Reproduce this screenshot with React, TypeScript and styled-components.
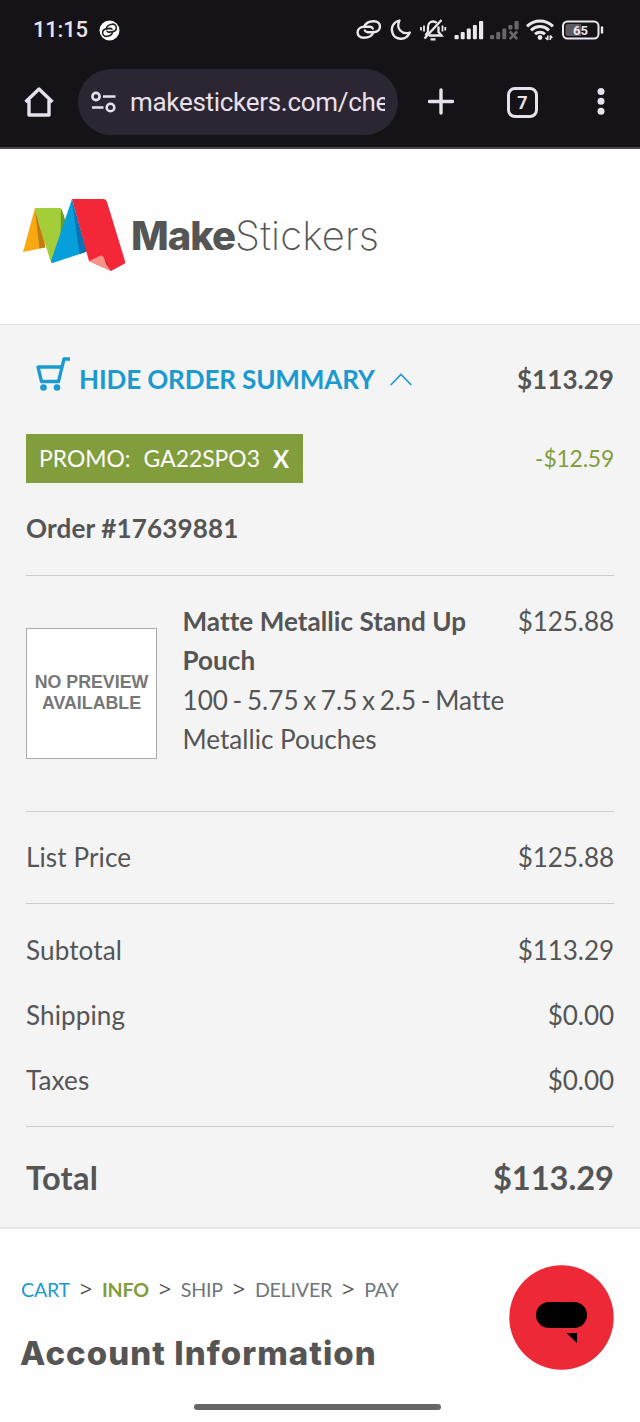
import React from "react";
import styled, { createGlobalStyle } from "styled-components";

const GlobalStyle = createGlobalStyle`
  *, *::before, *::after { box-sizing: border-box; }
  body { margin: 0; background: #fff; overflow: hidden; }
  svg { display: block; flex: none; }
`;

const Screen = styled.div`
  position: relative;
  width: 640px;
  height: 1422px;
  overflow: hidden;
  background: #fefefe;
  color: #555;
  font-family: Lato, sans-serif;
  font-size: 26.1px;
  line-height: 39px;
  font-variant-ligatures: none;
`;

const DeviceChrome = styled.div`
  height: 149px;
  background: #151218;
  border-bottom: 2px solid #4b494c;
  color: #e8e0ec;
`;

const StatusBar = styled.div`
  height: 60px;
  display: flex;
  align-items: center;
  justify-content: space-between;
  padding: 0 35px 0 33px;
`;

const Clock = styled.div`
  display: flex;
  align-items: center;
  gap: 11px;
  font: 500 22px/26px Roboto, sans-serif;
  letter-spacing: -0.2px;
`;

const AddressBar = styled.div`
  height: 84px;
  display: flex;
  align-items: center;
  padding: 0 34px 0 24px;
`;

const UrlPill = styled.div`
  width: 320px;
  height: 66px;
  margin-left: 24px;
  padding: 0 13px;
  border-radius: 33px;
  background: #2c2632;
  display: flex;
  align-items: center;
  gap: 14px;
`;

const Url = styled.div`
  width: 256px;
  overflow: hidden;
  white-space: nowrap;
  font: 400 26px/36px Roboto, sans-serif;
  letter-spacing: -0.3px;
`;

const BrowserActions = styled.div`
  flex: 1;
  display: flex;
  align-items: center;
  justify-content: space-between;
  padding-left: 30px;
`;

const TabCount = styled.div`
  width: 31px;
  height: 31px;
  margin-left: 11px;
  margin-right: 16px;
  border: 3px solid #e8e0ec;
  border-radius: 8px;
  font: 700 18px/25px Roboto, sans-serif;
  text-align: center;
`;

const SiteHeader = styled.header`
  height: 176px;
  padding: 0 22px 3px;
  border-bottom: 1px solid #dedede;
  display: flex;
  align-items: center;
  background: #fefefe;
`;

const Wordmark = styled.div`
  display: flex;
  align-items: baseline;
  margin-left: 4px;
  padding-top: 1px;
  font-family: Inter, sans-serif;
  font-size: 40px;
  line-height: 48px;
  white-space: nowrap;
`;

const WordmarkPart = styled.span<{ $weight: number; $spacing: number }>`
  font-weight: ${(p) => p.$weight};
  letter-spacing: ${(p) => p.$spacing}px;
`;

const Summary = styled.section`
  height: 904px;
  padding: 34px 26px 0;
  border-bottom: 2px solid #e6e6e6;
  background: #f4f4f4;
`;

const Row = styled.div<{ $gap?: number }>`
  display: flex;
  justify-content: space-between;
  align-items: center;
  margin-top: ${(p) => p.$gap ?? 0}px;
  white-space: nowrap;
`;

const Label = styled.span`
  letter-spacing: 0.1px;
`;

const Amount = styled.span`
  letter-spacing: -0.1px;
`;

const Toggle = styled.div`
  display: flex;
  align-items: center;
  height: 40px;
  padding-left: 10px;
  color: #1c9ad0;
  font-weight: 700;
`;

const CartIcon = styled.svg`
  margin-bottom: 10px;
`;

const ToggleText = styled.span`
  margin: 0 15px 0 8px;
  letter-spacing: -0.17px;
`;

const Strong = styled.span<{ $size?: number; $spacing?: number }>`
  font-weight: 700;
  font-size: ${(p) => p.$size ?? 26.1}px;
  letter-spacing: ${(p) => p.$spacing ?? 0}px;
`;

const Promo = styled.div`
  display: flex;
  align-items: center;
  width: 277px;
  height: 49px;
  padding: 0 13px;
  background: #829d3c;
  color: #fff;
  font-size: 22.9px;
  gap: 13px;
`;

const Discount = styled.span`
  color: #829d3c;
  font-size: 22.9px;
  letter-spacing: -0.2px;
`;

const Rule = styled.hr<{ $top: number; $bottom: number }>`
  height: 1px;
  border: 0;
  margin: ${(p) => p.$top}px 0 ${(p) => p.$bottom}px;
  background: #cdcdcd;
`;

const Item = styled.div`
  display: flex;
  align-items: flex-start;
  height: 157px;
`;

const Thumbnail = styled.div`
  flex: none;
  width: 131px;
  height: 131px;
  margin-top: 26px;
  padding-bottom: 2px;
  border: 1px solid #aaa;
  background: #fff;
  color: #777;
  display: flex;
  align-items: center;
  justify-content: center;
  text-align: center;
  font: 700 17.8px/21px "Liberation Sans", sans-serif;
  white-space: nowrap;
`;

const ItemText = styled.div`
  flex: 1;
  margin-left: 25.5px;
  line-height: 39.3px;
  white-space: nowrap;
`;

const ItemSize = styled.span`
  word-spacing: -2px;
`;

const Checkout = styled.section`
  padding: 46px 20px 0 21px;
`;

const Steps = styled.nav`
  display: flex;
  align-items: center;
  height: 30px;
  font-size: 19.6px;
  line-height: 30px;
  letter-spacing: -0.2px;
`;

const Step = styled.span<{ $color?: string; $bold?: boolean }>`
  color: ${(p) => p.$color ?? "#70757b"};
  font-weight: ${(p) => (p.$bold ? 700 : 400)};
`;

const StepArrow = styled.span`
  width: 32px;
  padding-bottom: 4px;
  text-align: center;
  font: 500 22px/27px "Open Sans", sans-serif;
`;

const Title = styled.h1`
  margin: 25px 0 0 -1px;
  font: 800 33px/46px Inter, sans-serif;
  letter-spacing: 1.05px;
  white-space: nowrap;
`;

const ChatButton = styled.div`
  position: absolute;
  left: 509px;
  top: 1265px;
  width: 105px;
  height: 105px;
`;

const GestureBar = styled.div`
  position: absolute;
  left: 194px;
  top: 1404px;
  width: 247px;
  height: 6px;
  border-radius: 3px;
  background: #666;
`;

const LinkGlyph = () => (
  <g fill="none" stroke="currentColor" strokeWidth="2.4" strokeLinecap="round">
    <path d="M8.500 7.500C9.500 3.500 13 1.700 18 1.700C26.500 1.700 26 12.300 18 12.700H12C10.500 12.500 9.500 12 9 11" />
    <path d="M17.500 12.500C16.500 16.500 13 18.300 8 18.300C-.5 18.300 0 7.700 8 7.300H14C15.500 7.500 16.500 8 17 9" />
  </g>
);

const StatusIcons = () => (
  <svg width="250" height="30" viewBox="355 15 250 30" color="#ece6ef">
    <g transform="translate(355.800 19.500)"><LinkGlyph /></g>
    <path d="M399.500 20.500C393 22 390.500 28 392.500 33C395 40 406 41.500 409.800 32.500C402 35 395.500 28.500 399.500 20.500Z" fill="none" stroke="currentColor" strokeWidth="2.300" strokeLinejoin="round" />
    <g fill="none" stroke="currentColor" strokeWidth="2.300">
      <path d="M429 35.500H441.500L438.500 32V26.500M425.500 35.500L428 31.500V27C428 23.500 430.300 21.500 433 21.500C434.500 21.500 435.800 22 436.800 23" />
      <path d="M441.500 20L424.500 38.500M430.500 39.300H435.500" />
      <path d="M424 25.500V31.500M421 27V30.500M442.500 25.500V31.500M445.300 27V30.500" strokeWidth="1.800" />
    </g>
    <g fill="currentColor">
      <rect x="454.500" y="35" width="4.200" height="4.300" rx="1" /><rect x="460.700" y="32" width="4" height="7.300" rx="1" /><rect x="466.800" y="28.500" width="4" height="10.800" rx="1" /><rect x="472.900" y="25" width="4" height="14.300" rx="1" /><rect x="479" y="21" width="4.200" height="18.300" rx="1" />
    </g>
    <g fill="#69656c">
      <rect x="490" y="35" width="4.200" height="4.300" rx="1" /><rect x="496.200" y="32" width="4" height="7.300" rx="1" /><rect x="502.300" y="28.500" width="4" height="10.800" rx="1" /><rect x="508.400" y="25" width="4" height="4.500" rx="1" /><rect x="514.500" y="21" width="4.200" height="8.500" rx="1" />
      <path d="M509.700 31.500L517.200 39M517.200 31.500L509.700 39" stroke="#69656c" strokeWidth="2.500" />
    </g>
    <g fill="none" stroke="currentColor" strokeWidth="3">
      <path d="M527 26.300C534.500 19.300 545.500 19.300 553 26.300" /><path d="M531 30.300C536.500 25.300 543.500 25.300 549 30.300" /><path d="M535 34.200C538 31.700 542 31.700 545 34.200" />
    </g>
    <circle cx="540" cy="37.500" r="2.400" fill="currentColor" />
    <path d="M547.800 35.500V40M547.800 40L545.500 37.500M550.300 40V35.500M550.300 35.500L552.300 38" fill="none" stroke="currentColor" strokeWidth="1.500" />
    <rect x="563" y="21.500" width="35.500" height="17" rx="4.500" fill="none" stroke="currentColor" strokeWidth="2" />
    <path d="M568 24H581V36H568Q565.500 36 565.500 33.500V26.500Q565.500 24 568 24Z" fill="#5e5a61" />
    <path d="M602 27.500V32.500" stroke="currentColor" strokeWidth="2.400" strokeLinecap="round" />
    <text x="580.500" y="34.700" textAnchor="middle" fill="currentColor" fontFamily="Roboto, sans-serif" fontSize="13" fontWeight="700">65</text>
  </svg>
);

const LogoMark = () => (
  <svg width="105" height="76" viewBox="22 197 105 76">
    <path d="M35 208L23 252L45 247.500V230Z" fill="#f8a912" />
    <path d="M35 210L39.500 248.600L45.500 247.300Z" fill="#bf7b14" />
    <path d="M34.500 209Q35 208 36 208H60Q61.500 208 62 210L65.500 222L53 262Q51.500 264 50.500 261Z" fill="#a4ce39" />
    <path d="M61 208.500Q64.500 216 65.500 222L60.500 237Z" fill="#699c2c" />
    <path d="M72 199L51 261Q51 264 54 262.500L86 252Z" fill="#079fdb" />
    <path d="M72 200L79.500 254L87 251.500Z" fill="#0874b5" />
    <path d="M72 199H104Q106 199.500 107 202L125 261Q125.500 263 124 264L111 271L89 261Z" fill="#f32737" />
    <path d="M89 261L101 255.500Q103 255.500 104 258L111 271Z" fill="#f99387" />
    <path d="M104 257Q107 263 111 271L106 264Z" fill="#ca1629" />
  </svg>
);

const steps = [
  { label: "CART", color: "#1c9ad0" },
  { label: "INFO", color: "#829d3c", bold: true },
  { label: "SHIP" },
  { label: "DELIVER" },
  { label: "PAY" },
];

const charges = [
  ["Subtotal", "$113.29"],
  ["Shipping", "$0.00"],
  ["Taxes", "$0.00"],
];

export default function App() {
  return (
    <Screen>
      <GlobalStyle />
      <DeviceChrome>
        <StatusBar>
          <Clock>
            11:15
            <svg width="21" height="21" viewBox="0 0 21 21" color="#222">
              <circle cx="10.500" cy="10.500" r="10" fill="#fff" />
              <g transform="translate(2.200 3.500) rotate(-8 8 7) scale(.64 .68)"><LinkGlyph /></g>
            </svg>
          </Clock>
          <StatusIcons />
        </StatusBar>
        <AddressBar>
          <svg width="30" height="32" viewBox="0 0 30 32" fill="none" stroke="#e8e0ec" strokeWidth="3.400" strokeLinejoin="round">
            <path d="M1.500 16L15 3L28.500 16M5 14V29H25V14" />
          </svg>
          <UrlPill>
            <svg width="25" height="22" viewBox="0 0 25 22" fill="none" stroke="#e8e0ec" strokeWidth="2.600">
              <circle cx="5" cy="5.500" r="3.600" /><path d="M12 5.500H24.500M1 16.500H12.500" /><circle cx="19.500" cy="16.500" r="3.800" />
            </svg>
            <Url>makestickers.com/che</Url>
          </UrlPill>
          <BrowserActions>
            <svg width="26" height="28" viewBox="0 0 26 28" stroke="#e8e0ec" strokeWidth="3.400" strokeLinecap="round">
              <path d="M13 2V25M1.500 13.500H24.500" />
            </svg>
            <TabCount>7</TabCount>
            <svg width="10" height="28" viewBox="0 0 10 28" fill="#e8e0ec">
              <circle cx="5" cy="3.500" r="3.500" /><circle cx="5" cy="13.300" r="3.500" /><circle cx="5" cy="23.200" r="3.500" />
            </svg>
          </BrowserActions>
        </AddressBar>
      </DeviceChrome>

      <SiteHeader>
        <LogoMark />
        <Wordmark>
          <WordmarkPart $weight={800} $spacing={-1}>Make</WordmarkPart>
          <WordmarkPart $weight={250} $spacing={0.15}>Stickers</WordmarkPart>
        </Wordmark>
      </SiteHeader>

      <Summary>
        <Row>
          <Toggle>
            <CartIcon width="35" height="36" viewBox="0 0 35 36" fill="none" stroke="#1c9ad0" strokeWidth="3.300" strokeLinejoin="round">
              <path d="M34 3H28L22.500 25.500H5.500L2 11H25.500" /><circle cx="7.500" cy="31.500" r="3.300" fill="#1c9ad0" stroke="none" /><circle cx="21" cy="31.500" r="3.300" fill="#1c9ad0" stroke="none" />
            </CartIcon>
            <ToggleText>HIDE ORDER SUMMARY</ToggleText>
            <svg width="22" height="13" viewBox="0 0 22 13" fill="none" stroke="#1c9ad0" strokeWidth="1.700"><path d="M.7 12L11 1.500L21.300 12" /></svg>
          </Toggle>
          <Strong>$113.29</Strong>
        </Row>
        <Row $gap={35}>
          <Promo><span>PROMO:</span><span>GA22SPO3</span><Strong $size={24}>X</Strong></Promo>
          <Discount>-$12.59</Discount>
        </Row>
        <Row $gap={26}><Strong $spacing={0.12}>Order #17639881</Strong></Row>
        <Rule $top={27} $bottom={26} />
        <Item>
          <Thumbnail>NO PREVIEW<br />AVAILABLE</Thumbnail>
          <ItemText>
            <Strong $spacing={0.03}>Matte Metallic Stand Up<br />Pouch</Strong><br />
            <ItemSize>100 - 5.75 x 7.5 x 2.5 - Matte</ItemSize><br />
            Metallic Pouches
          </ItemText>
          <Amount>$125.88</Amount>
        </Item>
        <Rule $top={52} $bottom={26} />
        <Row><Label>List Price</Label><Amount>$125.88</Amount></Row>
        <Rule $top={26} $bottom={27} />
        {charges.map(([label, amount], i) => (
          <Row key={label} $gap={i ? 26 : 0}><Label>{label}</Label><Amount>{amount}</Amount></Row>
        ))}
        <Rule $top={26} $bottom={31} />
        <Row><Strong $size={32.6} $spacing={0.3}>Total</Strong><Strong $size={32.6}>$113.29</Strong></Row>
      </Summary>

      <Checkout>
        <Steps>
          {steps.map((s, i) => (
            <React.Fragment key={s.label}>
              {i > 0 && <StepArrow>&gt;</StepArrow>}
              <Step $color={s.color} $bold={s.bold}>{s.label}</Step>
            </React.Fragment>
          ))}
        </Steps>
        <Title>Account Information</Title>
      </Checkout>

      <ChatButton>
        <svg width="105" height="105" viewBox="0 0 105 105">
          <circle cx="52.500" cy="52.500" r="52.200" fill="#ed2937" />
          <rect x="27" y="37" width="51" height="26" rx="13" />
          <path d="M57.500 68H68V78Z" />
        </svg>
      </ChatButton>
      <GestureBar />
    </Screen>
  );
}
